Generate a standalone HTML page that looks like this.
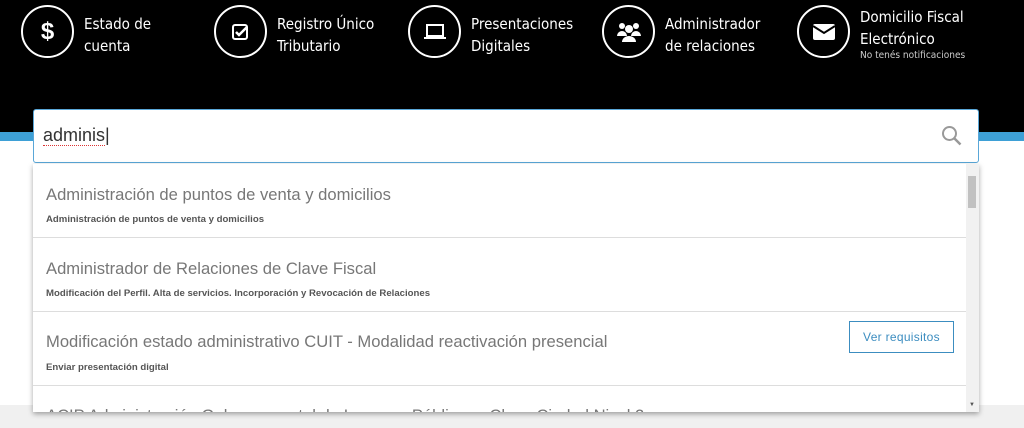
<!DOCTYPE html>
<html><head><meta charset="utf-8"><style>
*{margin:0;padding:0;box-sizing:border-box}
html,body{width:1024px;height:428px;overflow:hidden}
body{background:#fff;font-family:"Liberation Sans",sans-serif;position:relative}
.hdr{position:absolute;left:0;top:0;width:1024px;height:134px;background:#000}
.blue{position:absolute;left:0;top:132px;width:1024px;height:9px;background:#3ea0d6}
.grey{position:absolute;left:0;top:405px;width:1024px;height:23px;background:#f0f0f0}
.it{position:absolute;top:5px;height:54px}
.circ{position:absolute;left:0;top:0;width:53px;height:53px;border:2px solid #fff;border-radius:50%;display:flex;align-items:center;justify-content:center;color:#fff}
.lbl{position:absolute;left:63px;top:8px;color:#fff;font-size:15px;line-height:22px;white-space:nowrap;font-family:"DejaVu Sans Condensed","Liberation Sans",sans-serif}
.sm{font-size:10px;line-height:12px;color:#ccc;display:block}
.search{position:absolute;left:33px;top:109px;width:946px;height:54px;background:#fff;border:1px solid #5aa7d8;border-radius:3px}
.search .t{position:absolute;left:9px;top:15px;font-size:18px;color:#333}
.search .t span{border-bottom:1px dotted #d33}
.dd{position:absolute;left:33px;top:164px;width:946px;height:248px;background:#fff;box-shadow:0 2px 5px rgba(0,0,0,.35);overflow:hidden}
.row{position:absolute;left:0;width:933px;height:74px;border-bottom:1px solid #ddd}
.row .a{position:absolute;left:13px;top:21px;font-size:16.6px;color:#777;white-space:nowrap}
.row .b{position:absolute;left:13px;top:50px;font-size:9.6px;font-weight:bold;color:#555;white-space:nowrap}
.btn{position:absolute;left:816px;top:157px;width:105px;height:32px;border:1px solid #3c8dc0;color:#3c8dc0;font-size:12px;display:flex;align-items:center;justify-content:center;letter-spacing:.3px}
.sb{position:absolute;left:933px;top:0;width:13px;height:248px;background:#f1f1f1}
.thumb{position:absolute;left:2px;top:12px;width:8px;height:32px;background:#c1c1c1}
</style></head><body>
<div class="hdr"></div>
<div class="blue"></div>
<div class="grey"></div>

<div class="it" style="left:21px"><div class="circ"><span style="font-size:24px;font-weight:bold">$</span></div><div class="lbl">Estado de<br>cuenta</div></div>
<div class="it" style="left:214px"><div class="circ"><svg width="20" height="20" viewBox="0 0 20 20"><rect x="2" y="3" width="14" height="14" rx="2" fill="none" stroke="#fff" stroke-width="2"/><path d="M5 10l3 3 8-8" fill="none" stroke="#fff" stroke-width="2.5"/></svg></div><div class="lbl">Registro Único<br>Tributario</div></div>
<div class="it" style="left:408px"><div class="circ"><svg width="24" height="18" viewBox="0 0 24 18"><rect x="4" y="2" width="16" height="11" fill="none" stroke="#fff" stroke-width="2"/><rect x="1" y="14" width="22" height="2" fill="#fff"/></svg></div><div class="lbl">Presentaciones<br>Digitales</div></div>
<div class="it" style="left:602px"><div class="circ"><svg width="26" height="22" viewBox="0 0 26 22"><circle cx="6" cy="5" r="3" fill="#fff"/><circle cx="20" cy="5" r="3" fill="#fff"/><circle cx="13" cy="8" r="4" fill="#fff"/><path d="M1 15a5 5 0 0 1 10 0zM15 15a5 5 0 0 1 10 0z" fill="#fff"/><path d="M6 21a7 6 0 0 1 14 0z" fill="#fff"/></svg></div><div class="lbl">Administrador<br>de relaciones</div></div>
<div class="it" style="left:797px"><div class="circ"><svg width="24" height="18" viewBox="0 0 24 18"><rect x="1" y="1" width="22" height="16" rx="2" fill="#fff"/><path d="M1 3l11 7 11-7" fill="none" stroke="#000" stroke-width="2"/></svg></div><div class="lbl" style="top:1px">Domicilio Fiscal<br>Electrónico<span class="sm">No tenés notificaciones</span></div></div>

<div class="search"><div class="t"><span>adminis</span>|</div>
<svg style="position:absolute;left:907px;top:15px" width="22" height="22" viewBox="0 0 22 22"><circle cx="8.5" cy="8.5" r="6.5" fill="none" stroke="#999" stroke-width="2"/><path d="M13.5 13.5l6 6" stroke="#999" stroke-width="2.5"/></svg></div>

<div class="dd">
<div class="row" style="top:0"><div class="a">Administración de puntos de venta y domicilios</div><div class="b">Administración de puntos de venta y domicilios</div></div>
<div class="row" style="top:74px"><div class="a">Administrador de Relaciones de Clave Fiscal</div><div class="b">Modificación del Perfil. Alta de servicios. Incorporación y Revocación de Relaciones</div></div>
<div class="row" style="top:148px"><div class="a" style="top:20px">Modificación estado administrativo CUIT - Modalidad reactivación presencial</div><div class="b">Enviar presentación digital</div></div>
<div class="row" style="top:221px;border:none"><div class="a">ACIP Administración Gubernamental de Ingresos Públicos - Clave Ciudad Nivel 2</div></div>
<div class="btn">Ver requisitos</div>
<div class="sb"><div class="thumb"></div><div style="position:absolute;left:3px;top:238px;font-size:6px;color:#555">▼</div></div>
</div>
</body></html>
